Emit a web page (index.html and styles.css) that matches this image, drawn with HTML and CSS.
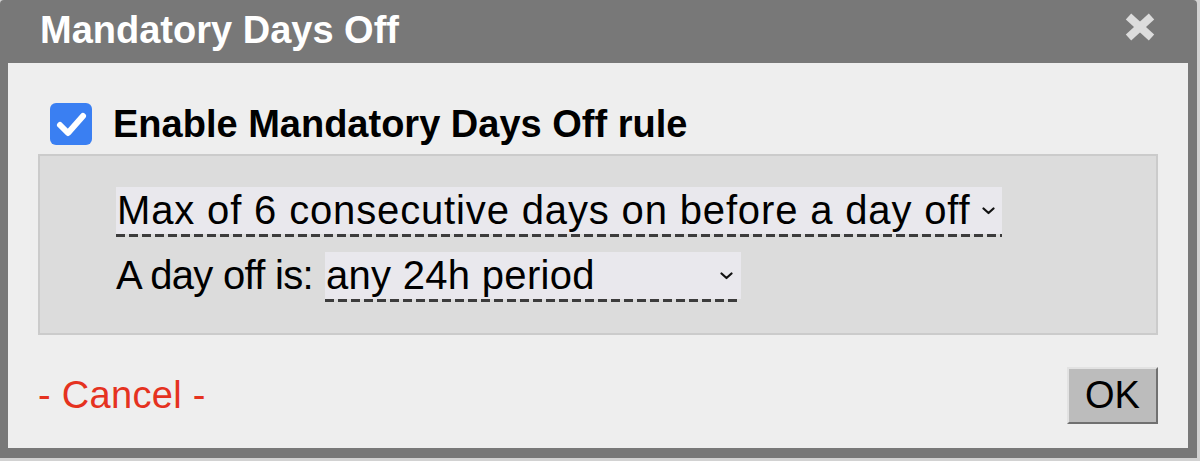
FILE: index.html
```html
<!DOCTYPE html>
<html>
<head>
<meta charset="utf-8">
<title>Mandatory Days Off</title>
<link rel="stylesheet" href="styles.css">
</head>
<body>
<div class="dialog">
  <div class="titlebar">
    <span class="title">Mandatory Days Off</span>
    <svg class="close" width="32" height="28" viewBox="0 0 32 28" aria-label="Close">
      <line x1="4.5" y1="3.5" x2="27.5" y2="24.5" stroke="#dcdcdc" stroke-width="8"/>
      <line x1="27.5" y1="3.5" x2="4.5" y2="24.5" stroke="#dcdcdc" stroke-width="8"/>
    </svg>
  </div>
  <div class="content">
    <label class="enable">
      <span class="checkbox">
        <svg width="42" height="42" viewBox="0 0 42 42">
          <polyline points="10,22 18,30 33,13" fill="none" stroke="#fff" stroke-width="6" stroke-linecap="round" stroke-linejoin="round"/>
        </svg>
      </span>
      <span class="enable-text">Enable Mandatory Days Off rule</span>
    </label>
    <div class="panel">
      <div class="select select-wide">
        <span class="select-text">Max of 6 consecutive days on before a day off</span>
        <svg class="chevron" width="13" height="8" viewBox="0 0 13 8"><polyline points="1.5,1.5 6.5,6 11.5,1.5" fill="none" stroke="#111" stroke-width="2.2" stroke-linecap="round" stroke-linejoin="round"/></svg>
      </div>
      <div class="row">
        <span class="label">A day off is:</span>
        <div class="select select-period">
          <span class="select-text">any 24h period</span>
          <svg class="chevron" width="13" height="8" viewBox="0 0 13 8"><polyline points="1.5,1.5 6.5,6 11.5,1.5" fill="none" stroke="#111" stroke-width="2.2" stroke-linecap="round" stroke-linejoin="round"/></svg>
        </div>
      </div>
    </div>
    <div class="footer">
      <span class="cancel">- Cancel -</span>
      <button class="ok">OK</button>
    </div>
  </div>
</div>
</body>
</html>
```
FILE: styles.css
```css
html, body {
  margin: 0;
  padding: 0;
}
body {
  background: #d2d2d2;
  width: 1200px;
  height: 461px;
  overflow: hidden;
  font-family: "Liberation Sans", Arial, sans-serif;
}
.dialog {
  width: 1197px;
  height: 458px;
  box-sizing: border-box;
  background: #787878;
  border-radius: 4px 4px 0 0;
  padding: 0 9px 10px 8px;
  display: flex;
  flex-direction: column;
}
.titlebar {
  height: 63px;
  flex: none;
  display: flex;
  justify-content: space-between;
  align-items: flex-start;
  padding: 0 32px 0 32px;
}
.title {
  color: #ffffff;
  font-weight: bold;
  font-size: 38px;
  line-height: 60px;
}
.close {
  margin-top: 13px;
}
.content {
  flex: 1;
  background: #eeeeee;
  padding: 40px 30px 24px 30px;
  display: flex;
  flex-direction: column;
}
.enable {
  display: flex;
  align-items: center;
  height: 42px;
  padding-left: 12px;
  gap: 21px;
}
.checkbox {
  width: 42px;
  height: 42px;
  border-radius: 6px;
  background: #3a7ff2;
  display: block;
}
.checkbox svg {
  display: block;
}
.enable-text {
  font-weight: bold;
  font-size: 38px;
  color: #000;
  line-height: 42px;
}
.panel {
  margin-top: 9px;
  border: 2px solid #cbcbcb;
  background: #dcdcdc;
  padding: 31px 0 31px 76px;
  display: flex;
  flex-direction: column;
  align-items: flex-start;
  gap: 15px;
}
.select {
  height: 50px;
  box-sizing: border-box;
  padding-bottom: 3px;
  display: flex;
  align-items: center;
  background:
    repeating-linear-gradient(90deg, #3c3c3c 0 9px, transparent 9px 13px) left bottom / 100% 3px no-repeat,
    linear-gradient(#e9e8ed, #e9e8ed) left top / 100% 47px no-repeat;
}
.select-text {
  font-size: 40px;
  line-height: 47px;
  color: #000;
  white-space: nowrap;
  padding-left: 1px;
}
.select-wide .select-text {
  letter-spacing: 0.85px;
}
.select-wide .chevron {
  margin-left: 11px;
  margin-right: 7px;
}
.select-period {
  width: 416px;
  margin-left: 12px;
}
.select-period .select-text {
  letter-spacing: 0.3px;
}
.select-period .chevron {
  margin-left: auto;
  margin-right: 8px;
}
.row {
  display: flex;
  align-items: center;
  height: 50px;
}
.label {
  font-size: 40px;
  letter-spacing: -0.7px;
  color: #000;
  line-height: 47px;
  padding-bottom: 3px;
}
.footer {
  margin-top: 32px;
  display: flex;
  justify-content: space-between;
  align-items: center;
  height: 57px;
}
.cancel {
  color: #e5321f;
  font-size: 38px;
  letter-spacing: 0.3px;
}
.ok {
  width: 91px;
  height: 57px;
  box-sizing: border-box;
  background: #bcbcbc;
  border: 2px solid;
  border-color: #e2e2e2 #707070 #707070 #e2e2e2;
  font-family: "Liberation Sans", Arial, sans-serif;
  font-size: 38px;
  color: #000;
  padding: 0;
  margin: 0;
}
```
